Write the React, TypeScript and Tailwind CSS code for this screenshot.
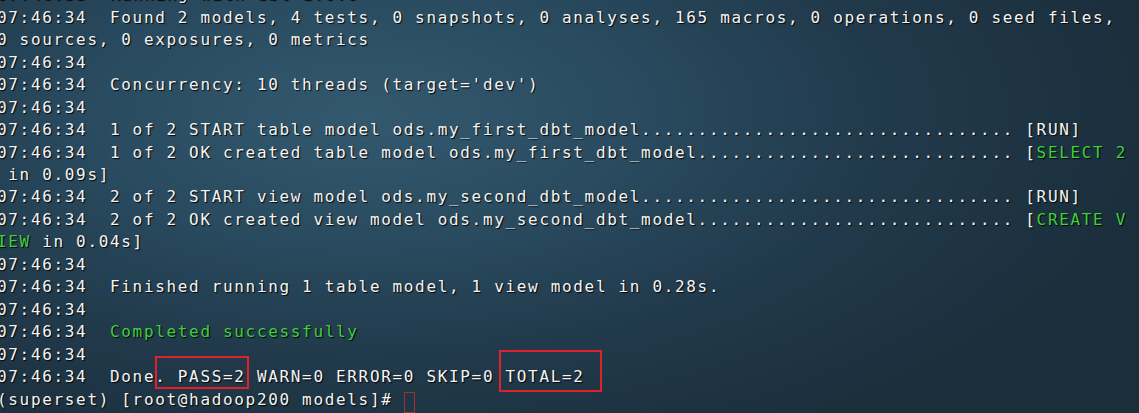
import React from "react";

const T = "07:46:34  ";

function G({ children }: { children: React.ReactNode }) {
  return <span className="text-[#3fcf3f]">{children}</span>;
}

export default function App() {
  const l6 = "1 of 2 START table model ods.my_first_dbt_model".padEnd(80, ".");
  const l7 = "1 of 2 OK created table model ods.my_first_dbt_model".padEnd(80, ".");
  const l9 = "2 of 2 START view model ods.my_second_dbt_model".padEnd(80, ".");
  const l10 = "2 of 2 OK created view model ods.my_second_dbt_model".padEnd(80, ".");

  const lines: React.ReactNode[] = [
    <>{"07:46:33  Running with dbt=1.0.0"}</>,
    <>{T + "Found 2 models, 4 tests, 0 snapshots, 0 analyses, 165 macros, 0 operations, 0 seed files, "}</>,
    <>{"0 sources, 0 exposures, 0 metrics"}</>,
    <>{T}</>,
    <>{T + "Concurrency: 10 threads (target='dev')"}</>,
    <>{T}</>,
    <>{T + l6 + " [RUN]"}</>,
    <>{T + l7 + " ["}<G>SELECT 2</G></>,
    <>{" in 0.09s]"}</>,
    <>{T + l9 + " [RUN]"}</>,
    <>{T + l10 + " ["}<G>CREATE V</G></>,
    <><G>IEW</G>{" in 0.04s]"}</>,
    <>{T}</>,
    <>{T + "Finished running 1 table model, 1 view model in 0.28s."}</>,
    <>{T}</>,
    <>{T}<G>Completed successfully</G></>,
    <>{T}</>,
    <>{T + "Done. PASS=2 WARN=0 ERROR=0 SKIP=0 TOTAL=2"}</>,
    <>
      {"(superset) [root@hadoop200 models]# "}
      <span className="inline-block align-top w-[11px] h-[21px] border border-[#a3302e] translate-y-[3px]" />
    </>,
  ];

  return (
    <div className="relative w-[1139px] h-[413px] overflow-hidden bg-[radial-gradient(ellipse_70%_90%_at_32%_28%,#33596f_0%,#294a5f_35%,#213a4b_65%,#1b2e3c_100%)]">
      <div className="-mt-[15.75px] -ml-[3px] font-['DejaVu_Sans_Mono',monospace] text-[16px] leading-[22.47px] tracking-[1.667px] text-[#f4f4f4] [text-shadow:1px_1px_1px_rgba(0,0,0,0.95)] whitespace-pre">
        {lines.map((ln, i) => (
          <div key={i} className="h-[22.47px]">
            {ln}
          </div>
        ))}
      </div>
      <div className="absolute left-[155px] top-[356px] w-[94px] h-[33px] border-2 border-[#e0212b]" />
      <div className="absolute left-[499px] top-[350px] w-[103px] h-[42px] border-2 border-[#e0212b]" />
    </div>
  );
}
